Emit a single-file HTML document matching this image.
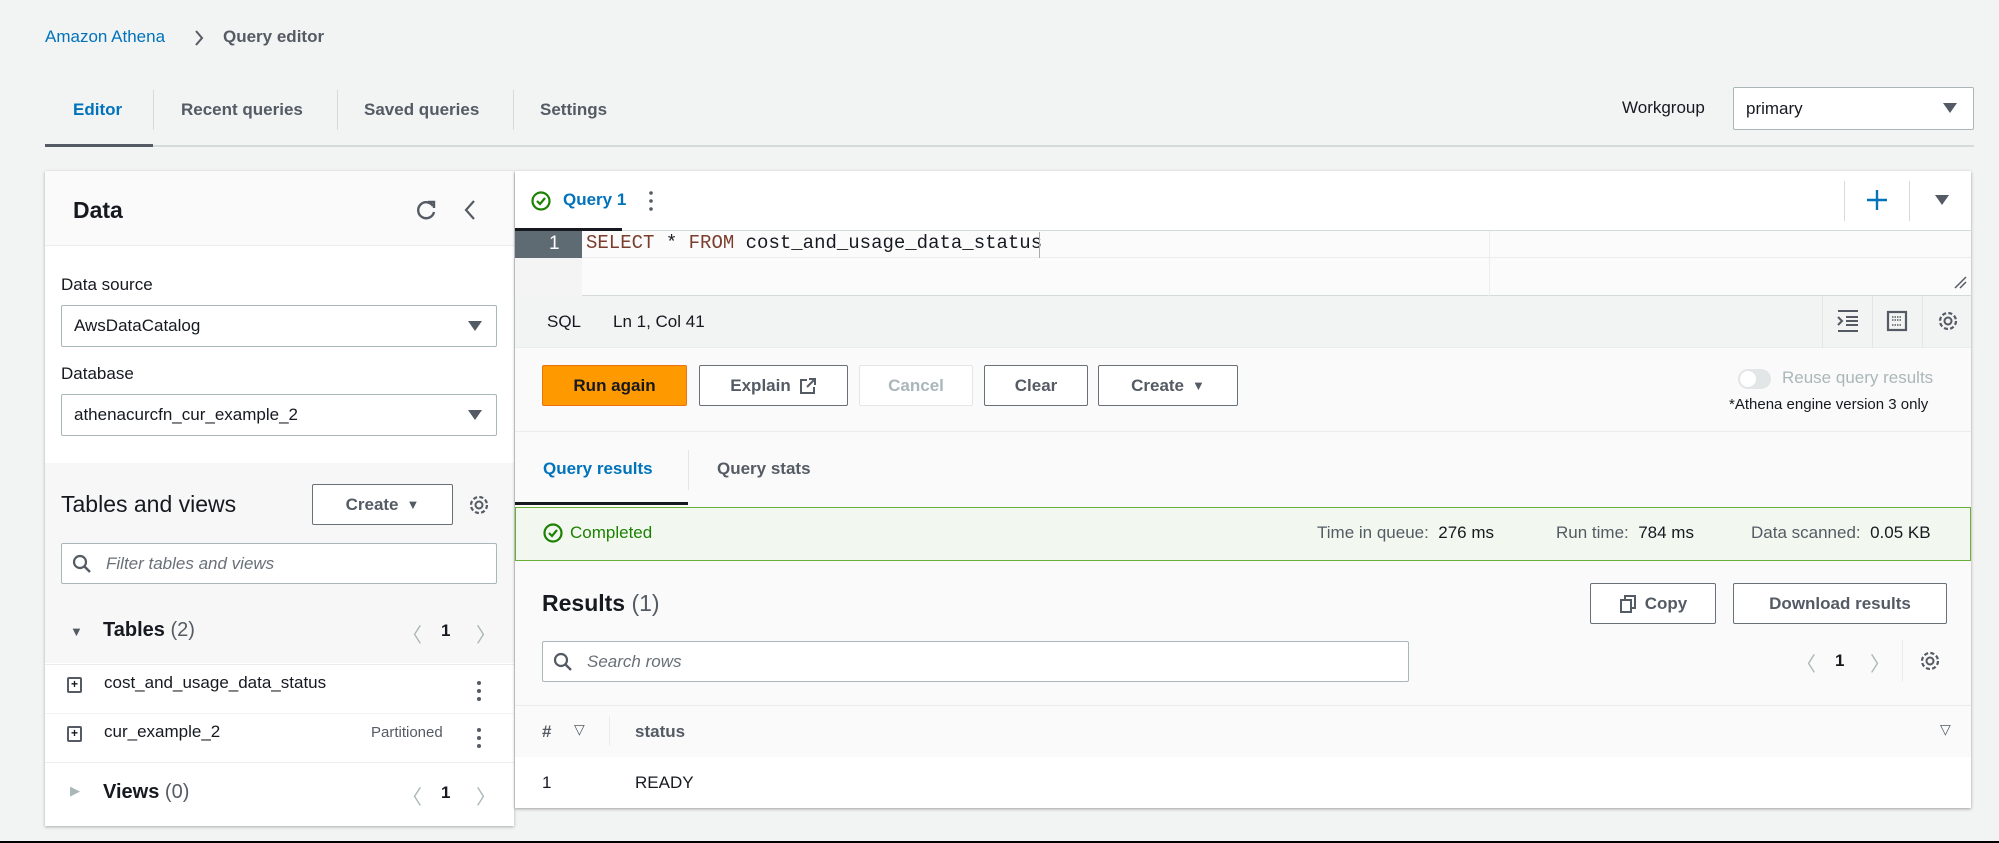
<!DOCTYPE html>
<html><head><meta charset="utf-8"><style>
*{box-sizing:border-box;margin:0;padding:0}
body{width:1999px;height:843px;background:#f2f3f3;font-family:"Liberation Sans",sans-serif;color:#16191f;position:relative;overflow:hidden;font-size:17px}
.a{position:absolute;white-space:nowrap}
.b{font-weight:bold}
.btn{position:absolute;border:1.5px solid #687078;background:#fff;border-radius:2px;font-weight:bold;color:#545b64;font-size:17px;display:flex;align-items:center;justify-content:center;gap:8px}
.sel{position:absolute;border:1.5px solid #aab7b8;background:#fff;border-radius:2px;font-size:17px;display:flex;align-items:center;padding-left:12px}
.tri{position:absolute;width:0;height:0;border-left:7px solid transparent;border-right:7px solid transparent;border-top:10px solid #545b64}
.g{color:#545b64}
</style></head><body>
<div class="a" style="left:45px;top:27px;color:#0073bb">Amazon Athena</div>
<svg class="a" style="left:194px;top:30px" width="10" height="16"><path d="M2 1l6 7-6 7" fill="none" stroke="#545b64" stroke-width="2"/></svg>
<div class="a b g" style="left:223px;top:27px">Query editor</div>

<div class="a b" style="left:73px;top:100px;color:#0073bb">Editor</div>
<div class="a b g" style="left:181px;top:100px">Recent queries</div>
<div class="a b g" style="left:364px;top:100px">Saved queries</div>
<div class="a b g" style="left:540px;top:100px">Settings</div>
<div class="a" style="left:153px;top:90px;width:1px;height:40px;background:#d5dbdb"></div>
<div class="a" style="left:337px;top:90px;width:1px;height:40px;background:#d5dbdb"></div>
<div class="a" style="left:513px;top:90px;width:1px;height:40px;background:#d5dbdb"></div>
<div class="a" style="left:45px;top:145px;width:1929px;height:2px;background:#d5dbdb"></div>
<div class="a" style="left:45px;top:144px;width:108px;height:3px;background:#545b64"></div>
<div class="a" style="left:1622px;top:98px">Workgroup</div>
<div class="sel" style="left:1733px;top:87px;width:241px;height:43px">primary</div>
<div class="tri" style="left:1943px;top:103px"></div>

<!-- left panel -->
<div class="a" style="left:45px;top:171px;width:469px;height:655px;background:#fff;box-shadow:0 1px 3px rgba(0,0,0,.3)"></div>
<div class="a" style="left:45px;top:171px;width:469px;height:75px;background:#fafafa;border-bottom:1px solid #eaeded"></div>
<div class="a b" style="left:73px;top:197px;font-size:23px">Data</div>
<svg class="a" style="left:414px;top:198px" width="24" height="24"><path d="M19 8A8 8 0 1 0 20 14" fill="none" stroke="#545b64" stroke-width="2.4"/><path d="M14 4h6v6" fill="none" stroke="#545b64" stroke-width="2.4"/></svg>
<svg class="a" style="left:463px;top:199px" width="14" height="22"><path d="M11 2L3 11l8 9" fill="none" stroke="#545b64" stroke-width="2.2"/></svg>
<div class="a" style="left:61px;top:275px">Data source</div>
<div class="sel" style="left:61px;top:305px;width:436px;height:42px">AwsDataCatalog</div>
<div class="tri" style="left:468px;top:321px"></div>
<div class="a" style="left:61px;top:364px">Database</div>
<div class="sel" style="left:61px;top:394px;width:436px;height:42px">athenacurcfn_cur_example_2</div>
<div class="tri" style="left:468px;top:410px"></div>
<div class="a" style="left:45px;top:463px;width:469px;height:200px;background:#f7f7f7"></div>
<div class="a" style="left:61px;top:491px;font-size:23px">Tables and views</div>
<div class="btn" style="left:312px;top:484px;width:141px;height:41px">Create <span style="font-size:13px">▼</span></div>
<svg class="a" style="left:468px;top:494px" width="22" height="22"><circle cx="11" cy="11" r="3.5" fill="none" stroke="#545b64" stroke-width="2"/><circle cx="11" cy="11" r="8" fill="none" stroke="#545b64" stroke-width="2.2" stroke-dasharray="4 2.3"/></svg>
<div class="sel" style="left:61px;top:543px;width:436px;height:41px;padding-left:44px;color:#687078;font-style:italic">Filter tables and views</div>
<svg class="a" style="left:72px;top:554px" width="20" height="20"><circle cx="8" cy="8" r="6" fill="none" stroke="#545b64" stroke-width="2.2"/><path d="M12.5 12.5L18 18" stroke="#545b64" stroke-width="2.4"/></svg>
<div class="a" style="left:70px;top:624px;font-size:13px;color:#545b64">▼</div>
<div class="a" style="left:103px;top:619px;font-size:20px"><b>Tables</b> <span class="g">(2)</span></div>
<div class="a g" style="left:402px;top:619px;font-size:20px;color:#aab7b8">〈</div>
<div class="a b" style="left:441px;top:621px">1</div>
<div class="a" style="left:476px;top:619px;font-size:20px;color:#aab7b8">〉</div>
<div class="a" style="left:45px;top:664px;width:469px;height:98px;background:#fff;border-top:1px solid #eaeded"></div>
<div class="a" style="left:45px;top:713px;width:469px;height:1px;background:#f2f3f3"></div>
<div class="a" style="left:45px;top:762px;width:469px;height:1px;background:#eaeded"></div>
<div class="a" style="left:67px;top:677px;width:15px;height:16px;border:2px solid #545b64;border-radius:2px;font-size:12px;line-height:11px;text-align:center;font-weight:bold">+</div>
<div class="a" style="left:104px;top:673px">cost_and_usage_data_status</div>
<div class="a" style="left:67px;top:726px;width:15px;height:16px;border:2px solid #545b64;border-radius:2px;font-size:12px;line-height:11px;text-align:center;font-weight:bold">+</div>
<div class="a" style="left:104px;top:722px">cur_example_2</div>
<div class="a g" style="left:371px;top:724px;font-size:15px">Partitioned</div>
<svg class="a" style="left:476px;top:680px" width="6" height="22"><circle cx="3" cy="3" r="2" fill="#545b64"/><circle cx="3" cy="11" r="2" fill="#545b64"/><circle cx="3" cy="19" r="2" fill="#545b64"/></svg>
<svg class="a" style="left:476px;top:727px" width="6" height="22"><circle cx="3" cy="3" r="2" fill="#545b64"/><circle cx="3" cy="11" r="2" fill="#545b64"/><circle cx="3" cy="19" r="2" fill="#545b64"/></svg>
<div class="a" style="left:70px;top:783px;font-size:13px;color:#aab7b8">▶</div>
<div class="a" style="left:103px;top:781px;font-size:20px"><b>Views</b> <span class="g">(0)</span></div>
<div class="a" style="left:402px;top:781px;font-size:20px;color:#aab7b8">〈</div>
<div class="a b" style="left:441px;top:783px">1</div>
<div class="a" style="left:476px;top:781px;font-size:20px;color:#aab7b8">〉</div>

<!-- right panel -->
<div class="a" style="left:515px;top:171px;width:1456px;height:637px;background:#fafafa;box-shadow:0 1px 3px rgba(0,0,0,.35)"></div>
<div class="a" style="left:515px;top:171px;width:1456px;height:60px;background:#fff;border-bottom:1px solid #d5dbdb"></div>
<svg class="a" style="left:530px;top:190px" width="22" height="22"><circle cx="11" cy="11" r="8.5" fill="none" stroke="#1d8102" stroke-width="2.2"/><path d="M7 11l3 3 5-6" fill="none" stroke="#1d8102" stroke-width="2.2"/></svg>
<div class="a b" style="left:563px;top:190px;color:#0073bb">Query 1</div>
<svg class="a" style="left:648px;top:190px" width="6" height="22"><circle cx="3" cy="3" r="1.8" fill="#545b64"/><circle cx="3" cy="11" r="1.8" fill="#545b64"/><circle cx="3" cy="19" r="1.8" fill="#545b64"/></svg>
<div class="a" style="left:515px;top:228px;width:107px;height:3px;background:#16191f"></div>
<div class="a" style="left:1844px;top:181px;width:1px;height:40px;background:#d5dbdb"></div>
<div class="a" style="left:1909px;top:181px;width:1px;height:40px;background:#d5dbdb"></div>
<svg class="a" style="left:1866px;top:189px" width="22" height="22"><path d="M11 1v20M1 11h20" stroke="#0073bb" stroke-width="2.4"/></svg>
<div class="tri" style="left:1935px;top:195px"></div>
<!-- editor -->
<div class="a" style="left:515px;top:231px;width:1456px;height:65px;background:#fbfbfb;border-bottom:1px solid #d5dbdb"></div>
<div class="a" style="left:515px;top:231px;width:67px;height:27px;background:#5f6b73"></div>
<div class="a" style="left:515px;top:258px;width:67px;height:38px;background:#f4f4f4"></div>
<div class="a" style="left:549px;top:233px;color:#fff;font-size:19px">1</div>
<div class="a" style="left:582px;top:231px;width:1389px;height:27px;border-bottom:1px solid #eaeded"></div>
<div class="a" style="left:1489px;top:231px;width:1px;height:65px;background:#eaeded"></div>
<div class="a" style="left:586px;top:232px;font-family:'Liberation Mono',monospace;font-size:19px"><span style="color:#7a3e2e">SELECT</span> * <span style="color:#7a3e2e">FROM</span> cost_and_usage_data_status</div>
<div class="a" style="left:1039px;top:232px;width:1px;height:26px;background:#aaa"></div>
<svg class="a" style="left:1953px;top:275px" width="14" height="14"><path d="M2 13L13 2M7 13l6-6" stroke="#545b64" stroke-width="1.5"/></svg>
<!-- status bar -->
<div class="a" style="left:515px;top:296px;width:1456px;height:52px;background:#f2f3f3;border-bottom:1px solid #eaeded"></div>
<div class="a" style="left:547px;top:312px">SQL</div>
<div class="a" style="left:613px;top:312px">Ln 1, Col 41</div>
<div class="a" style="left:1822px;top:296px;width:1px;height:52px;background:#e3e6e6"></div>
<div class="a" style="left:1872px;top:296px;width:1px;height:52px;background:#e3e6e6"></div>
<div class="a" style="left:1922px;top:296px;width:1px;height:52px;background:#e3e6e6"></div>
<svg class="a" style="left:1836px;top:309px" width="24" height="24"><path d="M2 2h20M2 22h20M10 8h12M10 12h12M10 16h12M2 8l4 4-4 4" fill="none" stroke="#545b64" stroke-width="2"/></svg>
<svg class="a" style="left:1886px;top:310px" width="22" height="22"><rect x="2" y="2" width="18" height="18" fill="none" stroke="#545b64" stroke-width="2.2"/><path d="M6 7h10M6 10h10M6 15h10" stroke="#545b64" stroke-width="1.6" stroke-dasharray="1.5 1"/></svg>
<svg class="a" style="left:1937px;top:310px" width="22" height="22"><circle cx="11" cy="11" r="3.5" fill="none" stroke="#545b64" stroke-width="2"/><circle cx="11" cy="11" r="8" fill="none" stroke="#545b64" stroke-width="2.2" stroke-dasharray="4 2.3"/></svg>
<!-- buttons -->
<div class="btn" style="left:542px;top:365px;width:145px;height:41px;border-color:#ec7211;color:#16191f;background:#f90">Run again</div>
<div class="btn" style="left:699px;top:365px;width:149px;height:41px">Explain <svg width="18" height="18"><path d="M8 3H2v13h13v-6M10 2h6v6M16 2L8 10" fill="none" stroke="#545b64" stroke-width="2"/></svg></div>
<div class="btn" style="left:859px;top:365px;width:114px;height:41px;border-color:#e3e6e6;color:#aab7b8">Cancel</div>
<div class="btn" style="left:984px;top:365px;width:104px;height:41px">Clear</div>
<div class="btn" style="left:1098px;top:365px;width:140px;height:41px">Create <span style="font-size:13px">▼</span></div>
<div class="a" style="left:1738px;top:369px;width:33px;height:20px;border-radius:10px;background:#e3e6e6"></div>
<div class="a" style="left:1740px;top:371px;width:16px;height:16px;border-radius:8px;background:#fff"></div>
<div class="a" style="left:1782px;top:368px;color:#aab7b8">Reuse query results</div>
<div class="a" style="left:1729px;top:396px;font-size:15px">*Athena engine version 3 only</div>
<div class="a" style="left:515px;top:431px;width:1456px;height:1px;background:#eaeded"></div>
<div class="a b" style="left:543px;top:459px;color:#0073bb">Query results</div>
<div class="a b g" style="left:717px;top:459px">Query stats</div>
<div class="a" style="left:688px;top:450px;width:1px;height:40px;background:#e3e6e6"></div>
<div class="a" style="left:515px;top:502px;width:173px;height:3px;background:#16191f"></div>
<div class="a" style="left:515px;top:507px;width:1456px;height:54px;background:#f2f8f0;border:1.5px solid #6aaf35"></div>
<svg class="a" style="left:542px;top:522px" width="22" height="22"><circle cx="11" cy="11" r="8.5" fill="none" stroke="#1d8102" stroke-width="2.2"/><path d="M7 11l3 3 5-6" fill="none" stroke="#1d8102" stroke-width="2.2"/></svg>
<div class="a" style="left:570px;top:523px;color:#1d8102">Completed</div>
<div class="a" style="left:1317px;top:523px"><span class="g">Time in queue:</span>&nbsp; 276 ms</div>
<div class="a" style="left:1556px;top:523px"><span class="g">Run time:</span>&nbsp; 784 ms</div>
<div class="a" style="left:1751px;top:523px"><span class="g">Data scanned:</span>&nbsp; 0.05 KB</div>
<div class="a" style="left:542px;top:590px;font-size:23px"><b>Results</b> <span class="g">(1)</span></div>
<div class="btn" style="left:1590px;top:583px;width:126px;height:41px"><svg width="18" height="20"><rect x="2" y="6" width="10" height="12" fill="none" stroke="#545b64" stroke-width="2"/><path d="M6 6V2h10v12h-4" fill="none" stroke="#545b64" stroke-width="2"/></svg>Copy</div>
<div class="btn" style="left:1733px;top:583px;width:214px;height:41px">Download results</div>
<div class="sel" style="left:542px;top:641px;width:867px;height:41px;padding-left:44px;color:#687078;font-style:italic">Search rows</div>
<svg class="a" style="left:553px;top:652px" width="20" height="20"><circle cx="8" cy="8" r="6" fill="none" stroke="#545b64" stroke-width="2.2"/><path d="M12.5 12.5L18 18" stroke="#545b64" stroke-width="2.4"/></svg>
<div class="a" style="left:1796px;top:648px;font-size:20px;color:#aab7b8">〈</div>
<div class="a b" style="left:1835px;top:651px">1</div>
<div class="a" style="left:1870px;top:648px;font-size:20px;color:#aab7b8">〉</div>
<div class="a" style="left:1902px;top:640px;width:1px;height:42px;background:#eaeded"></div>
<svg class="a" style="left:1919px;top:650px" width="22" height="22"><circle cx="11" cy="11" r="3.5" fill="none" stroke="#545b64" stroke-width="2"/><circle cx="11" cy="11" r="8" fill="none" stroke="#545b64" stroke-width="2.2" stroke-dasharray="4 2.3"/></svg>
<div class="a" style="left:515px;top:705px;width:1456px;height:1px;background:#eaeded"></div>
<div class="a" style="left:515px;top:757px;width:1456px;height:51px;background:#fff"></div>
<div class="a b g" style="left:542px;top:722px">#</div>
<div class="a g" style="left:574px;top:721px;font-size:14px">▽</div>
<div class="a" style="left:609px;top:716px;width:1px;height:30px;background:#eaeded"></div>
<div class="a b g" style="left:635px;top:722px">status</div>
<div class="a g" style="left:1940px;top:721px;font-size:14px">▽</div>
<div class="a" style="left:542px;top:773px">1</div>
<div class="a" style="left:635px;top:773px">READY</div>
<div class="a" style="left:0;top:841px;width:1999px;height:2px;background:#000"></div>
</body></html>
